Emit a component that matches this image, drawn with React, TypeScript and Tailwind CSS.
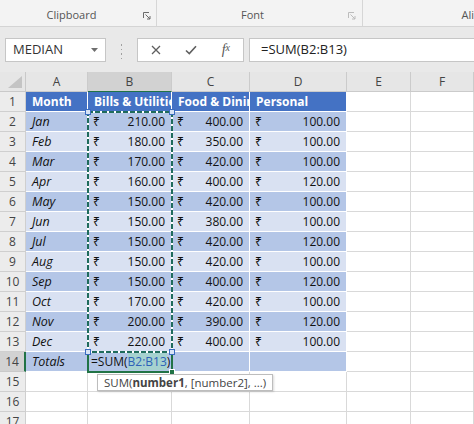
import React from "react";

const COLS = "grid grid-cols-[26px_62px_84px_78px_97px_64px_63px]";
const FONT = "font-['Open_Sans','Noto_Sans','DejaVu_Sans',sans-serif]";

const DARK = "bg-[#b4c6e7]";
const LIGHT = "bg-[#d9e1f2]";

const data: [string, number, number, number][] = [
  ["Jan", 210, 400, 100],
  ["Feb", 180, 350, 100],
  ["Mar", 170, 420, 100],
  ["Apr", 160, 400, 120],
  ["May", 150, 420, 100],
  ["Jun", 150, 380, 100],
  ["Jul", 150, 420, 120],
  ["Aug", 150, 420, 100],
  ["Sep", 150, 400, 120],
  ["Oct", 170, 420, 100],
  ["Nov", 200, 390, 120],
  ["Dec", 220, 400, 100],
];

function Launcher({ faded }: { faded?: boolean }) {
  return (
    <svg width="8" height="8" viewBox="0 0 8 8" className={faded ? "opacity-40" : ""}>
      <path d="M0.5 6V0.5H6" fill="none" stroke="#6b6b6b" strokeWidth="1" />
      <path d="M2.5 2.5L7 7M7 4V7H4" fill="none" stroke="#6b6b6b" strokeWidth="1" />
    </svg>
  );
}

function Ribbon() {
  return (
    <div className="flex h-[27px] border-b border-[#d4d4d4] bg-[#f3f3f3] text-[11px] text-[#555]">
      <div className="flex w-[157px] items-end border-r border-[#d6d6d6] pb-[3px]">
        <span className="flex-1 text-center leading-[16px]">Clipboard</span>
        <span className="mr-[5px] mb-[3px] flex">
          <Launcher />
        </span>
      </div>
      <div className="flex w-[206px] items-end border-r border-[#d6d6d6] pb-[3px]">
        <span className="flex-1 text-center leading-[16px]">Font</span>
        <span className="mr-[6px] mb-[3px] flex">
          <Launcher faded />
        </span>
      </div>
      <div className="flex flex-1 items-end justify-end pb-[3px]">
        <span className="leading-[16px]">Ali</span>
      </div>
    </div>
  );
}

function FormulaBar() {
  return (
    <div className="flex h-[45px] items-start bg-[#e9e9e9] pt-[11px]">
      <div className="ml-[5px] flex h-[24px] w-[101px] items-center justify-between border border-[#c6c6c6] bg-white pl-[7px] pr-[7px] text-[13px] text-[#333]">
        <span>MEDIAN</span>
        <svg width="7" height="4" viewBox="0 0 7 4">
          <path d="M0 0H7L3.5 4Z" fill="#6e6e6e" />
        </svg>
      </div>
      <div className="flex w-[31px] justify-center pt-[6px]">
        <div className="flex flex-col gap-[3px]">
          <span className="h-[1.5px] w-[1.5px] bg-[#a0a0a0]" />
          <span className="h-[1.5px] w-[1.5px] bg-[#a0a0a0]" />
          <span className="h-[1.5px] w-[1.5px] bg-[#a0a0a0]" />
          <span className="h-[1.5px] w-[1.5px] bg-[#a0a0a0]" />
        </div>
      </div>
      <div className="flex h-[24px] w-[107px] items-center border border-[#c6c6c6] bg-white">
        <span className="flex w-[36px] justify-center">
          <svg width="10" height="10" viewBox="0 0 10 10">
            <path d="M1 1L9 9M9 1L1 9" stroke="#5f5f5f" strokeWidth="1.3" />
          </svg>
        </span>
        <span className="flex w-[36px] justify-center">
          <svg width="12" height="10" viewBox="0 0 12 10">
            <path d="M1 5.5L4.3 8.6L11 1.2" fill="none" stroke="#5f5f5f" strokeWidth="1.6" />
          </svg>
        </span>
        <span className="flex w-[35px] justify-center font-['Liberation_Serif',serif] text-[14px] italic leading-none text-[#555]">
          f<span className="text-[10px] leading-none">x</span>
        </span>
      </div>
      <div className="ml-[5px] flex h-[24px] flex-1 items-center border border-r-0 border-[#c6c6c6] bg-white pl-[11px] text-[13px] text-[#222]">
        =SUM(B2:B13)
      </div>
    </div>
  );
}

function HeaderRow() {
  const letters = ["A", "B", "C", "D", "E", "F"];
  return (
    <div className={`${COLS} h-[20px] bg-[#e6e6e6] text-[12px] text-[#444]`}>
      <div className="relative border-r border-b border-[#c9c9c9]">
        <svg width="14" height="12" viewBox="0 0 14 12" className="absolute right-[3px] bottom-[3px]">
          <path d="M14 0V12H0Z" fill="#c4c4c4" />
        </svg>
      </div>
      {letters.map((l) => (
        <div
          key={l}
          className={`flex items-center justify-center border-r border-b border-[#cbcbcb] ${
            l === "B" ? "bg-[#d2d2d2] border-b-[#217346]" : ""
          }`}
        >
          {l}
        </div>
      ))}
    </div>
  );
}

function RowHead({ n, active }: { n: number; active?: boolean }) {
  return (
    <div
      className={`flex items-center justify-center border-b text-[12px] text-[#444] ${
        active
          ? "border-r-2 border-r-[#217346] border-b-[#c9c9c9] bg-[#d2d2d2]"
          : "border-r border-[#cfcfcf] bg-[#ececec]"
      }`}
    >
      {n}
    </div>
  );
}

function Money({ v, band }: { v: number; band: string }) {
  return (
    <div className={`flex items-center justify-between border-r border-b border-white pl-[5px] pr-[6px] ${band}`}>
      <span>₹</span>
      <span>{v.toFixed(2)}</span>
    </div>
  );
}

function Blank({ band }: { band?: string }) {
  return <div className={`border-r border-b ${band ? `border-white ${band}` : "border-[#d9d9d9]"}`} />;
}

export default function App() {
  return (
    <div className={`h-[424px] w-[474px] overflow-hidden bg-white ${FONT}`}>
      <Ribbon />
      <FormulaBar />
      <div className="relative">
        <HeaderRow />
        <div className={`${COLS} h-[20px] text-[12px] leading-[19px]`}>
          <RowHead n={1} />
          {["Month", "Bills & Utilities", "Food & Dining", "Personal"].map((h) => (
            <div
              key={h}
              className="overflow-hidden whitespace-nowrap border-r border-b border-white bg-[#4472c4] pl-[6px] font-bold text-white"
            >
              {h}
            </div>
          ))}
          <Blank />
          <Blank />
        </div>
        {data.map(([m, b, c, d], i) => {
          const n = i + 2;
          const band = n % 2 === 0 ? DARK : LIGHT;
          return (
            <div key={m} className={`${COLS} h-[20px] text-[12px] leading-[19px] text-[#111]`}>
              <RowHead n={n} />
              <div className={`border-r border-b border-white pl-[6px] text-[12.5px] italic ${band}`}>{m}</div>
              <Money v={b} band={band} />
              <Money v={c} band={band} />
              <Money v={d} band={band} />
              <Blank />
              <Blank />
            </div>
          );
        })}
        <div className={`${COLS} h-[20px] text-[12px] leading-[19px] text-[#111]`}>
          <RowHead n={14} active />
          <div className={`border-r border-b border-white pl-[6px] text-[12.5px] italic ${DARK}`}>Totals</div>
          <div className={`min-w-0 overflow-visible whitespace-nowrap border-r border-b border-white pl-[3px] text-[12px] ${DARK}`}>
            <span className="relative z-30 inline-block whitespace-nowrap">
              =SUM(<span className="bg-[#a6d2cf] text-[#2e62b8]">B2:B13</span>)
            </span>
          </div>
          <Blank band={DARK} />
          <Blank band={DARK} />
          <Blank />
          <Blank />
        </div>
        {[15, 16, 17].map((n) => (
          <div key={n} className={`${COLS} h-[20px] text-[12px] leading-[19px]`}>
            <RowHead n={n} />
            <Blank />
            <Blank />
            <Blank />
            <Blank />
            <Blank />
            <Blank />
          </div>
        ))}

        <svg className="pointer-events-none absolute left-0 top-0 z-20" width="474" height="352">
          <rect x="88" y="280" width="84" height="20" fill="none" stroke="#217346" strokeWidth="2" />
          <rect x="88" y="40" width="84" height="240" fill="none" stroke="#ffffff" strokeWidth="2" />
          <rect x="88" y="40" width="84" height="240" fill="none" stroke="#1f6b5c" strokeWidth="2" strokeDasharray="5 2" />
          {[
            [85.5, 37.5],
            [169.5, 37.5],
            [85.5, 277.5],
            [169.5, 277.5],
          ].map(([x, y]) => (
            <rect key={`${x}-${y}`} x={x} y={y} width="5" height="5" fill="#d8e4f6" stroke="#3a6cc0" strokeWidth="1" />
          ))}
          <rect x="169.5" y="297.5" width="5" height="5" fill="#217346" stroke="#ffffff" strokeWidth="1" />
        </svg>

        <div className="absolute left-[97px] top-[302px] z-30 flex h-[17px] items-center whitespace-nowrap border border-[#bdbdbd] bg-white pl-[6px] pr-[6px] text-[11.5px] text-[#444] shadow-[1px_1px_2px_rgba(0,0,0,0.15)]">
          SUM(<b className="font-bold">number1</b>, [number2], ...)
        </div>
      </div>
    </div>
  );
}
